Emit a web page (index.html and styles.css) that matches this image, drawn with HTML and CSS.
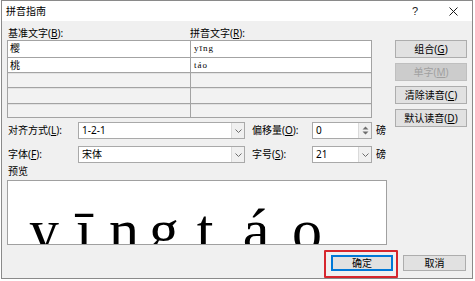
FILE: index.html
```html
<!DOCTYPE html>
<html lang="zh-CN">
<head>
<meta charset="utf-8">
<title>拼音指南</title>
<link rel="stylesheet" href="styles.css">
</head>
<body>
<div class="dialog">
  <div class="titlebar">
    <span class="title">拼音指南</span>
    <span class="help">?</span>
    <span class="close"><svg width="9" height="9" viewBox="0 0 9 9"><path d="M0.5 0.5L8.5 8.5M8.5 0.5L0.5 8.5" stroke="#1a1a1a" stroke-width="1"/></svg></span>
  </div>
  <div class="content">
    <div class="main">
      <div class="left">
        <div class="heads">
          <span class="head-base">基准文字(<u>B</u>):</span>
          <span class="head-py">拼音文字(<u>R</u>):</span>
        </div>
        <div class="grid">
          <div class="cell base">樱</div><div class="cell py">yīng</div>
          <div class="cell base">桃</div><div class="cell py">táo</div>
          <div class="cell empty"></div><div class="cell empty"></div>
          <div class="cell empty"></div><div class="cell empty"></div>
          <div class="cell empty"></div><div class="cell empty"></div>
        </div>
        <div class="opts">
          <span class="lbl">对齐方式(<u>L</u>):</span>
          <div class="combo wide"><span class="val">1-2-1</span><span class="arrow"><svg width="7" height="4" viewBox="0 0 7 4"><path d="M0.5 0.5L3.5 3.5L6.5 0.5" fill="none" stroke="#6d6d6d" stroke-width="1"/></svg></span></div>
          <span class="lbl lbl2">偏移量(<u>O</u>):</span>
          <div class="combo"><span class="val">0</span><span class="spinbtn"><svg width="7" height="9" viewBox="0 0 7 9"><path d="M3.5 0.5L6.5 3.5H0.5Z M3.5 8.5L6.5 5.5H0.5Z" fill="#6d6d6d"/></svg></span></div>
          <span class="unit">磅</span>

          <span class="lbl">字体(<u>F</u>):</span>
          <div class="combo wide"><span class="val">宋体</span><span class="arrow"><svg width="7" height="4" viewBox="0 0 7 4"><path d="M0.5 0.5L3.5 3.5L6.5 0.5" fill="none" stroke="#6d6d6d" stroke-width="1"/></svg></span></div>
          <span class="lbl lbl2">字号(<u>S</u>):</span>
          <div class="combo"><span class="val">21</span><span class="arrow"><svg width="7" height="4" viewBox="0 0 7 4"><path d="M0.5 0.5L3.5 3.5L6.5 0.5" fill="none" stroke="#6d6d6d" stroke-width="1"/></svg></span></div>
          <span class="unit">磅</span>
        </div>
        <div class="preview-label">预览</div>
        <div class="preview">
          <div class="pv-line">
            <span class="w1"><span>y</span><span>ī</span><span>n</span><span>g</span></span>
            <span class="w2"><span>t</span><span>á</span><span>o</span></span>
          </div>
        </div>
      </div>
      <div class="side">
        <button class="btn">组合(<u>G</u>)</button>
        <button class="btn" disabled>单字(<u>M</u>)</button>
        <button class="btn">清除读音(<u>C</u>)</button>
        <button class="btn">默认读音(<u>D</u>)</button>
      </div>
    </div>
    <div class="footer">
      <span class="ok-wrap"><button class="btn ok">确定</button></span>
      <button class="btn cancel">取消</button>
    </div>
  </div>
</div>
</body>
</html>
```
FILE: styles.css
```css
* { box-sizing: border-box; }
html, body { margin: 0; padding: 0; background: #ffffff; }
body {
  font-family: "Noto Sans", "Noto Sans CJK SC", sans-serif;
  font-size: 10px;
  color: #000;
}
u { text-decoration: underline; text-underline-offset: 1px; }

.dialog {
  margin-left: 1px;
  width: 472px;
  height: 279px;
  border: 1px solid #8a8a8a;
  background: #f0f0f0;
  display: flex;
  flex-direction: column;
}

.titlebar {
  height: 20px;
  background: #ffffff;
  display: flex;
  align-items: center;
  padding-left: 4px;
  padding-right: 4px;
  flex: none;
}
.title { font-size: 10px; line-height: 20px; }
.help {
  margin-left: auto;
  width: 20px;
  text-align: center;
  font-family: "Liberation Sans", sans-serif;
  font-size: 11px;
  color: #222;
}
.close {
  margin-left: 13px;
  width: 30px;
  display: flex;
  justify-content: center;
  align-items: center;
}
.close svg { display: block; }

.content {
  padding: 5px 4px 0 5px;
  flex: 1;
}

.main { display: flex; }
.left { width: 380px; }
.side {
  margin-left: 8px;
  margin-top: 14px;
  width: 72px;
  display: flex;
  flex-direction: column;
  gap: 5px;
}

.heads {
  height: 14px;
  display: flex;
  line-height: 14px;
}
.head-base { width: 183px; padding-left: 1px; }
.head-py { padding-left: 0; }

.grid {
  width: 365px;
  display: grid;
  grid-template-columns: 182px 1fr;
  grid-template-rows: 16px 14px 14px 15px 13px;
  gap: 1px;
  background: #a3a3a3;
  border: 1px solid #a3a3a3;
}
.cell {
  background: #ffffff;
  line-height: 15px;
  padding-left: 2px;
}
.cell.empty { background: #f2f2f2; box-shadow: inset 0 1px 0 #e2e2e2; }
.cell.py {
  font-family: "Liberation Serif", serif;
  font-size: 9px;
  letter-spacing: 1px;
  padding-left: 3px;
}

.opts {
  margin-top: 4px;
  display: grid;
  grid-template-columns: 71px 167px 67px 60px 15px;
  grid-template-rows: 17px 17px;
  row-gap: 7px;
  align-items: center;
}
.lbl { padding-left: 1px; line-height: 17px; }
.lbl2 { padding-left: 7px; }
.unit { padding-left: 4px; line-height: 17px; }

.combo {
  height: 17px;
  background: #ffffff;
  border: 1px solid #a9a9a9;
  display: flex;
  align-items: stretch;
}
.combo .val { flex: 1; padding-left: 3px; line-height: 15px; }
.arrow, .spinbtn {
  width: 13px;
  display: flex;
  justify-content: center;
  align-items: center;
  background: #f0f0f0;
  border-left: 1px solid #dadada;
}
.arrow svg, .spinbtn svg { display: block; }

.preview-label {
  height: 17px;
  line-height: 17px;
  padding-left: 1px;
}
.preview {
  width: 380px;
  height: 65px;
  background: #ffffff;
  border: 1px solid #a0a0a0;
  overflow: hidden;
}
.pv-line {
  display: flex;
  padding-left: 16px;
  padding-top: 19px;
  font-family: "Liberation Serif", "Times New Roman", serif;
  font-size: 60px;
  line-height: 60px;
  white-space: nowrap;
}
.w1, .w2 { display: flex; }
.w1 span { display: inline-block; width: 40px; text-align: center; }
.w2 { margin-left: -4.5px; }
.w2 span { display: inline-block; width: 51px; text-align: center; }

.btn {
  font-family: "Noto Sans", "Noto Sans CJK SC", sans-serif;
  font-size: 10px;
  height: 18px;
  padding: 0;
  margin: 0;
  background: #e1e1e1;
  border: 1px solid #adadad;
  color: #000;
  line-height: 16px;
}
.btn:disabled {
  background: #cccccc;
  border-color: #bfbfbf;
  color: #a0a0a0;
}

.footer {
  margin-top: 10px;
  display: flex;
  justify-content: flex-end;
  gap: 10px;
  padding-right: 2px;
}
.ok-wrap { position: relative; display: block; }
.ok-wrap::after {
  content: "";
  position: absolute;
  left: -7px;
  right: -5px;
  top: -5px;
  bottom: -7px;
  border: 2px solid #d6262d;
  border-radius: 1px;
}
.btn.ok {
  width: 62px;
  height: 16px;
  line-height: 14px;
  border: 1px solid #0078d7;
  box-shadow: inset 0 0 0 1px #0078d7;
  display: block;
}
.btn.cancel {
  width: 63px;
  height: 16px;
  line-height: 14px;
}
```
